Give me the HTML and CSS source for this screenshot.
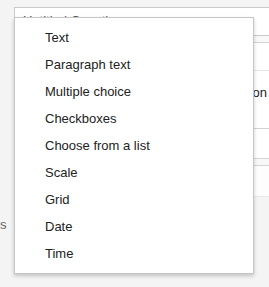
FILE: index.html
```html
<!DOCTYPE html>
<html lang="en">

<head>
  <meta charset="UTF-8">
  <meta name="viewport" content="width=device-width, initial-scale=1.0">
  <title>Question type</title>
  <link rel="stylesheet" href="styles.css">
</head>

<body>
  <div class="page">
    <div class="editor">
      <div class="title-input">Untitled Question</div>
      <div class="spacer"></div>
      <div class="help-input"></div>
      <div class="type-row"><span>Go to page based on</span></div>
      <div class="plain-row"></div>
      <div class="spacer"></div>
      <div class="plain-row last"></div>
    </div>

    <div class="settings">
      <div class="settings-label">s</div>
    </div>
  </div>

  <ul class="type-menu">
    <li>Text</li>
    <li>Paragraph text</li>
    <li>Multiple choice</li>
    <li>Checkboxes</li>
    <li>Choose from a list</li>
    <li>Scale</li>
    <li>Grid</li>
    <li>Date</li>
    <li>Time</li>
  </ul>
</body>

</html>
```

FILE: styles.css
```css
body {
  font-family: Arial, "Liberation Sans", sans-serif;
  font-size: 13px;
  margin: 0;
  padding: 0;
  background: #f4f4f4;
  color: #222;
  overflow: hidden;
}

.page {
  padding-top: 7px;
}

.editor {
  margin-left: 14px;
  background: #fff;
}

.title-input {
  height: 22px;
  padding: 5px 8px 0;
  border: 1px solid #c9c9c9;
  border-right: none;
  color: #555;
}

.spacer {
  height: 6px;
  background: #f8f8f8;
}

.help-input {
  height: 27px;
  border-top: 1px solid #d2d2d2;
  border-bottom: 1px solid #e6e6e6;
}

.type-row {
  height: 58px;
  box-sizing: border-box;
  display: flex;
  justify-content: flex-end;
  align-items: flex-start;
  padding: 14px 2px 0 0;
  border-bottom: 1px solid #d2d2d2;
  white-space: nowrap;
}

.plain-row {
  height: 29px;
  border-bottom: 1px solid #d6d6d6;
}

.plain-row.last {
  height: 30px;
  border-top: 1px solid #d6d6d6;
  border-bottom-color: #e8e8e8;
  background: #fdfdfd;
}

.settings {
  display: flex;
  padding-top: 20px;
}

.settings-label {
  color: #666;
}

.type-menu {
  position: absolute;
  top: 17px;
  left: 14px;
  width: 240px;
  box-sizing: border-box;
  margin: 0;
  padding: 6px 0;
  list-style: none;
  background: #fff;
  border: 1px solid #c6c6c6;
  box-shadow: 0 2px 4px rgba(0, 0, 0, 0.2);
}

.type-menu li {
  height: 27px;
  line-height: 27px;
  padding-left: 30px;
  color: #222;
  cursor: pointer;
}
```
